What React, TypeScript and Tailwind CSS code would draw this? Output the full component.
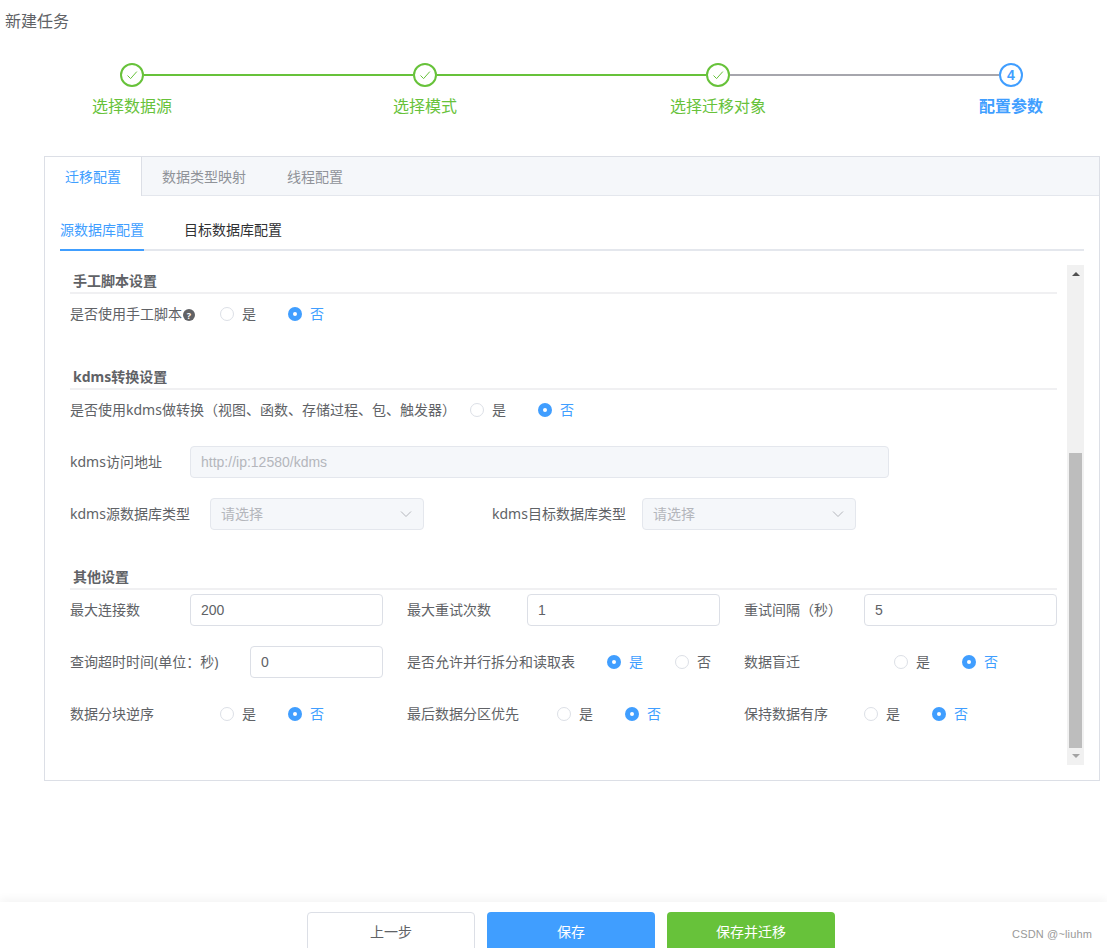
const fontStack = "[font-family:'Liberation_Sans','Noto_Sans_CJK_SC',sans-serif]";
const labelFont = "[font-family:'Noto_Sans','Noto_Sans_CJK_SC',sans-serif]";

function CheckIcon() {
  return (
    <svg width="12" height="12" viewBox="0 0 12 12" fill="none" stroke="#67c23a" strokeWidth="1">
      <path d="M1.5 6.5 L4.6 9.6 L10.8 2.6" />
    </svg>
  );
}

function StepCircle({ done, n }: { done: boolean; n: number }) {
  return (
    <div
      className={
        done
          ? "flex h-6 w-6 shrink-0 items-center justify-center rounded-full border-2 border-[#67c23a]"
          : "flex h-6 w-6 shrink-0 items-center justify-center rounded-full border-2 border-[#409eff] text-sm font-bold text-[#409eff]"
      }
    >
      {done ? <CheckIcon /> : n}
    </div>
  );
}

function Stepper() {
  return (
    <div>
      <div className="mt-[30px] flex items-center pl-[120px]">
        <StepCircle done n={1} />
        <div className="h-[2px] w-[269px] bg-[#67c23a]" />
        <StepCircle done n={2} />
        <div className="h-[2px] w-[269px] bg-[#67c23a]" />
        <StepCircle done n={3} />
        <div className="h-[2px] w-[269px] bg-[#a6a6ad]" />
        <StepCircle done={false} n={4} />
      </div>
      <div className="mt-[8px] flex gap-[133px] pl-[52px] text-base leading-6">
        {["选择数据源", "选择模式", "选择迁移对象"].map((t) => (
          <div key={t} className="w-[160px] text-center whitespace-nowrap text-[#67c23a]">
            {t}
          </div>
        ))}
        <div className="w-[160px] text-center font-bold whitespace-nowrap text-[#409eff]">配置参数</div>
      </div>
    </div>
  );
}

function Radio({ label, checked }: { label: string; checked: boolean }) {
  return (
    <div
      className={
        checked
          ? "flex w-[68px] shrink-0 items-center gap-2 text-[#409eff]"
          : "flex w-[68px] shrink-0 items-center gap-2"
      }
    >
      {checked ? (
        <span className="flex h-[14px] w-[14px] items-center justify-center rounded-full bg-[#409eff]">
          <span className="h-1 w-1 rounded-full bg-white" />
        </span>
      ) : (
        <span className="h-[14px] w-[14px] rounded-full border border-[#dcdfe6] bg-white" />
      )}
      <span className="leading-none">{label}</span>
    </div>
  );
}

function YesNo({ yes }: { yes: boolean }) {
  return (
    <div className="flex shrink-0 items-center">
      <Radio label="是" checked={yes} />
      <Radio label="否" checked={!yes} />
    </div>
  );
}

function RadioRow({ label, width, yes }: { label: string; width: string; yes?: boolean }) {
  return (
    <div className="flex h-8 items-center">
      <div className={`${width} shrink-0 whitespace-nowrap`}>{label}</div>
      <YesNo yes={!!yes} />
    </div>
  );
}

function InputRow({ label, value, width }: { label: string; value: string; width: string }) {
  return (
    <div className="flex h-8 items-center">
      <div className={`${width} shrink-0 whitespace-nowrap`}>{label}</div>
      <input
        readOnly
        value={value}
        className={`h-8 min-w-0 flex-1 rounded border border-[#dcdfe6] bg-white px-2.5 text-[#606266] outline-none ${fontStack}`}
      />
    </div>
  );
}

function SelectBox() {
  return (
    <div className="flex h-8 w-[214px] items-center justify-between rounded border border-[#e4e7ed] bg-[#f5f7fa] pr-[11px] pl-[10px] text-[#b4b6bc]">
      <span>请选择</span>
      <svg width="12" height="12" viewBox="0 0 12 12" fill="none" stroke="#b4b6bc" strokeWidth="1">
        <path d="M1 3.5 L6 8.5 L11 3.5" />
      </svg>
    </div>
  );
}

function SectionTitle({ children }: { children: string }) {
  return (
    <div className="h-6 border-b-2 border-[#f0f0f2] pl-[3px] text-sm leading-[22px] font-bold text-[#606266]">
      {children}
    </div>
  );
}

function ScrollTrack() {
  return (
    <div className="flex h-[500px] w-[17px] shrink-0 flex-col items-center bg-[#f1f1f1]">
      <svg width="8" height="17" viewBox="0 0 8 17" fill="#505050" className="shrink-0">
        <path d="M4 7 L8 11 L0 11 Z" />
      </svg>
      <div className="mt-[171px] h-[295px] w-[13px] shrink-0 bg-[#bdbdbd]" />
      <svg width="8" height="17" viewBox="0 0 8 17" fill="#a3a3a3" className="shrink-0">
        <path d="M0 6 L8 6 L4 10 Z" />
      </svg>
    </div>
  );
}

function FormArea() {
  return (
    <div className="flex h-[500px]">
      <div className={`w-[1007px] overflow-hidden px-2.5 pt-[5px] text-sm text-[#606266] ${labelFont}`}>
        <SectionTitle>手工脚本设置</SectionTitle>
        <div className="mt-1 flex h-8 items-center">
          <div className="flex w-[150px] shrink-0 items-center">
            是否使用手工脚本
            <span className="mt-0.5 ml-px flex h-3 w-3 items-center justify-center rounded-full bg-[#606266] text-[9px] leading-none font-bold text-white">
              ?
            </span>
          </div>
          <YesNo yes={false} />
        </div>

        <div className="mt-9">
          <SectionTitle>kdms转换设置</SectionTitle>
        </div>
        <div className="mt-1 flex h-8 items-center">
          <div className="w-[400px] shrink-0 whitespace-nowrap">是否使用kdms做转换（视图、函数、存储过程、包、触发器）</div>
          <YesNo yes={false} />
        </div>
        <div className="mt-5 flex h-8 items-center">
          <div className="w-[120px] shrink-0">kdms访问地址</div>
          <input
            readOnly
            value="http://ip:12580/kdms"
            className={`h-8 w-[699px] rounded border border-[#e4e7ed] bg-[#f5f7fa] px-2.5 text-[#b4b6bc] outline-none ${fontStack}`}
          />
        </div>
        <div className="mt-5 flex h-8 items-center">
          <div className="w-[140px] shrink-0 whitespace-nowrap">kdms源数据库类型</div>
          <SelectBox />
          <div className="ml-[68px] w-[150px] shrink-0 whitespace-nowrap">kdms目标数据库类型</div>
          <SelectBox />
        </div>

        <div className="mt-9">
          <SectionTitle>其他设置</SectionTitle>
        </div>
        <div className="mt-1 grid grid-cols-3 gap-x-6 gap-y-5">
          <InputRow label="最大连接数" value="200" width="w-[120px]" />
          <InputRow label="最大重试次数" value="1" width="w-[120px]" />
          <InputRow label="重试间隔（秒）" value="5" width="w-[120px]" />
          <InputRow label="查询超时时间(单位：秒)" value="0" width="w-[180px]" />
          <RadioRow label="是否允许并行拆分和读取表" width="w-[200px]" yes />
          <RadioRow label="数据盲迁" width="w-[150px]" />
          <RadioRow label="数据分块逆序" width="w-[150px]" />
          <RadioRow label="最后数据分区优先" width="w-[150px]" />
          <RadioRow label="保持数据有序" width="w-[120px]" />
        </div>
      </div>
      <ScrollTrack />
    </div>
  );
}

function Panel() {
  return (
    <div className="mt-[37px] ml-[44px] w-[1056px] border border-[#dcdfe6] bg-white text-sm">
      <div className="flex h-[39px] border-b border-[#e4e7ed] bg-[#f5f7fa] leading-[41px] text-[#909399]">
        <div className="h-[39px] border-r border-[#dcdfe6] bg-white px-5 text-[#409eff]">迁移配置</div>
        <div className="border-r border-transparent px-5">数据类型映射</div>
        <div className="border-r border-transparent px-5">线程配置</div>
      </div>
      <div className="px-[15px] pt-[15px] pb-[15px]">
        <div className="mb-[14px] flex h-10 gap-10 border-b-2 border-[#e4e7ed]">
          <div className="-mb-[2px] h-10 border-b-2 border-[#409eff] leading-[39px] text-[#409eff]">源数据库配置</div>
          <div className="leading-[39px] text-[#303133]">目标数据库配置</div>
        </div>
        <FormArea />
      </div>
    </div>
  );
}

function Footer() {
  return (
    <div className="relative h-[46px] shrink-0 bg-white shadow-[0_-4px_8px_rgba(0,0,0,0.04)]">
      <div className="flex gap-3 pt-[10px] pl-[307px] text-sm">
        <div className="flex h-10 w-[168px] shrink-0 items-center justify-center rounded border border-[#dcdfe6] bg-white text-[#606266]">
          上一步
        </div>
        <div className="flex h-10 w-[168px] shrink-0 items-center justify-center rounded bg-[#409eff] text-white">
          保存
        </div>
        <div className="flex h-10 w-[168px] shrink-0 items-center justify-center rounded bg-[#67c23a] text-white">
          保存并迁移
        </div>
      </div>
      <div className="absolute top-[24px] right-[15px] text-[11px] leading-4 tracking-[0.15px] text-[#999]">
        CSDN @~liuhm
      </div>
    </div>
  );
}

export default function App() {
  return (
    <div className={`flex h-[948px] w-[1107px] flex-col overflow-hidden bg-white ${fontStack}`}>
      <div className="min-h-0 flex-1">
        <div className="pt-[11px] pl-[5px] text-base leading-[22px] text-[#606266]">新建任务</div>
        <Stepper />
        <Panel />
      </div>
      <Footer />
    </div>
  );
}
